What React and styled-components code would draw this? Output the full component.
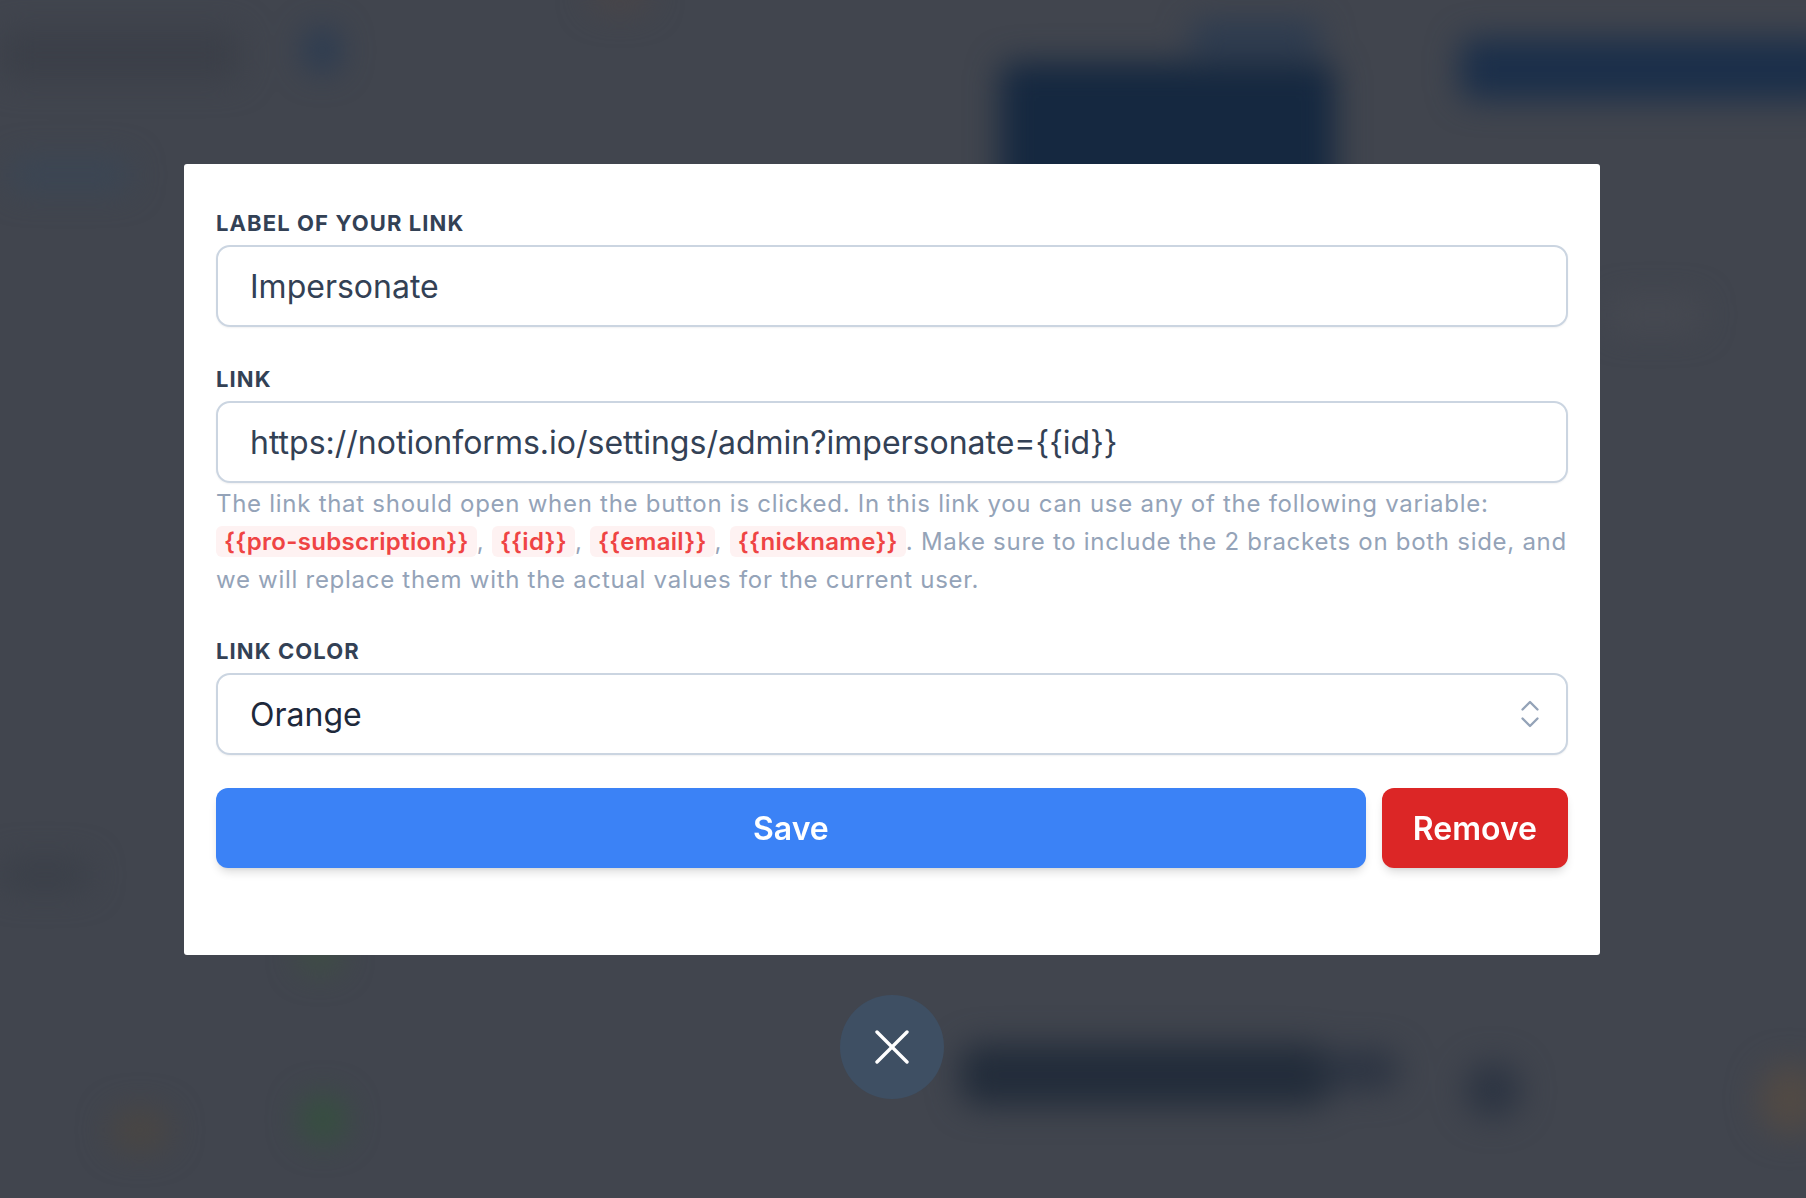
import React from "react";
import styled, { createGlobalStyle } from "styled-components";
import { ChevronsUpDown } from "lucide-react";

const GlobalStyle = createGlobalStyle`
  *, *::before, *::after { box-sizing: border-box; }
  html, body { margin: 0; padding: 0; }
  body {
    font-family: Inter, "Noto Sans", "Liberation Sans", sans-serif;
    background: #41454e;
    overflow: hidden;
  }
`;

const Page = styled.div`
  position: relative;
  width: 100vw;
  height: 100vh;
  overflow: hidden;
  background: #41454e;
`;

const Backdrop = styled.div`
  position: absolute;
  inset: 0;
  filter: blur(16px);
  pointer-events: none;
`;

const Blob = styled.div`
  position: absolute;
  left: ${(p) => p.$x}px;
  top: ${(p) => p.$y}px;
  width: ${(p) => p.$w}px;
  height: ${(p) => p.$h}px;
  background: ${(p) => p.$c};
  border-radius: ${(p) => p.$r || 12}px;
`;

const Stage = styled.div`
  position: relative;
  width: 1416px;
  margin-left: 184px;
  padding-top: 164px;
  display: flex;
  flex-direction: column;
  align-items: center;
`;

const Modal = styled.div`
  width: 100%;
  background: #ffffff;
  border-radius: 3px;
  padding: 43px 32px 87px;
  display: flex;
  flex-direction: column;
`;

const Field = styled.div`
  display: flex;
  flex-direction: column;
  margin-bottom: ${(p) => p.$gap ?? 36}px;
`;

const Label = styled.label`
  font-size: 22px;
  line-height: 32px;
  font-weight: 700;
  letter-spacing: 1.1px;
  color: #334155;
  margin-bottom: 6px;
`;

const TextInput = styled.input`
  height: 82px;
  width: 100%;
  border: 2px solid #cbd5e1;
  border-radius: 14px;
  padding: 0 32px;
  font-family: Inter, "Noto Sans", sans-serif;
  font-size: 32px;
  color: #334155;
  background: #fff;
  box-shadow: 0 1px 2px rgba(15, 23, 42, 0.06);
  outline: none;
`;

const SelectBox = styled.div`
  height: 82px;
  border: 2px solid #cbd5e1;
  border-radius: 14px;
  padding: 0 18px 0 32px;
  display: flex;
  align-items: center;
  justify-content: space-between;
  font-size: 32px;
  color: #1e293b;
  background: #fff;
  box-shadow: 0 1px 2px rgba(15, 23, 42, 0.06);
`;

const Help = styled.p`
  margin: 2px 0 0;
  font-size: 24px;
  line-height: 38px;
  letter-spacing: 0.72px;
  color: #94a3b8;
  white-space: nowrap;
`;

const Chip = styled.span`
  background: #fef2f2;
  color: #ef4444;
  font-weight: 600;
  letter-spacing: 0.3px;
  padding: 1px 8px;
  border-radius: 6px;
`;

const ButtonRow = styled.div`
  display: flex;
  gap: 16px;
`;

const Button = styled.button`
  height: 80px;
  border: none;
  border-radius: 12px;
  font-family: Inter, "Noto Sans", sans-serif;
  font-size: 32px;
  font-weight: 600;
  color: #fff;
  background: ${(p) => (p.$danger ? "#dc2626" : "#3b82f6")};
  flex: ${(p) => (p.$grow ? 1 : "0 0 auto")};
  padding: 0 31px;
  box-shadow: 0 6px 10px -2px rgba(0, 0, 0, 0.14), 0 2px 4px -2px rgba(0, 0, 0, 0.1);
  cursor: pointer;
`;

const CloseButton = styled.button`
  margin-top: 40px;
  width: 104px;
  height: 104px;
  border-radius: 50%;
  border: none;
  background: #3e4f63;
  display: flex;
  align-items: center;
  justify-content: center;
  cursor: pointer;
`;

const vars = ["{{pro-subscription}}", "{{id}}", "{{email}}", "{{nickname}}"];

export default function App() {
  return (
    <>
      <GlobalStyle />
      <Page>
        <Backdrop>
          <Blob $x={0} $y={30} $w={240} $h={50} $c="#3b3f48" $r={8} />
          <Blob $x={305} $y={28} $w={34} $h={44} $c="#283a52" $r={17} />
          <Blob $x={590} $y={-20} $w={60} $h={30} $c="#4a4547" $r={15} />
          <Blob $x={1000} $y={62} $w={335} $h={140} $c="#152840" $r={14} />
          <Blob $x={1190} $y={22} $w={130} $h={30} $c="#2a3a50" $r={10} />
          <Blob $x={1460} $y={38} $w={380} $h={62} $c="#1b2f4a" $r={14} />
          <Blob $x={10} $y={160} $w={120} $h={30} $c="#3a4655" $r={8} />
          <Blob $x={1610} $y={300} $w={90} $h={30} $c="#474a52" $r={8} />
          <Blob $x={960} $y={1044} $w={370} $h={62} $c="#222c3a" $r={20} />
          <Blob $x={1320} $y={1050} $w={80} $h={40} $c="#2c3442" $r={20} />
          <Blob $x={1465} $y={1062} $w={56} $h={56} $c="#2c3442" $r={28} />
          <Blob $x={300} $y={1096} $w={46} $h={46} $c="#34513d" $r={23} />
          <Blob $x={300} $y={940} $w={40} $h={30} $c="#3d5140" $r={15} />
          <Blob $x={110} $y={1110} $w={60} $h={40} $c="#4a4642" $r={20} />
          <Blob $x={1760} $y={1064} $w={60} $h={70} $c="#524a44" $r={30} />
          <Blob $x={0} $y={860} $w={90} $h={30} $c="#3a3f48" $r={10} />
        </Backdrop>
        <Stage>
          <Modal>
            <Field>
              <Label>LABEL OF YOUR LINK</Label>
              <TextInput defaultValue="Impersonate" readOnly />
            </Field>
            <Field>
              <Label>LINK</Label>
              <TextInput
                defaultValue="https://notionforms.io/settings/admin?impersonate={{id}}"
                readOnly
              />
              <Help>
                The link that should open when the button is clicked. In this link you can use any of
                the following variable:
                <br />
                {vars.map((v, i) => (
                  <React.Fragment key={v}>
                    <Chip>{v}</Chip>
                    {i < vars.length - 1 ? ", " : ""}
                  </React.Fragment>
                ))}
                . Make sure to include the 2 brackets on both side, and
                <br />
                we will replace them with the actual values for the current user.
              </Help>
            </Field>
            <Field $gap={33}>
              <Label>LINK COLOR</Label>
              <SelectBox>
                <span>Orange</span>
                <ChevronsUpDown size={36} strokeWidth={1.6} color="#94a3b8" />
              </SelectBox>
            </Field>
            <ButtonRow>
              <Button $grow>Save</Button>
              <Button $danger>Remove</Button>
            </ButtonRow>
          </Modal>
          <CloseButton aria-label="Close">
            <svg width="36" height="36" viewBox="0 0 36 36" fill="none">
              <path
                d="M3 3 L33 33 M33 3 L3 33"
                stroke="#ffffff"
                strokeWidth="3.4"
                strokeLinecap="round"
              />
            </svg>
          </CloseButton>
        </Stage>
      </Page>
    </>
  );
}
